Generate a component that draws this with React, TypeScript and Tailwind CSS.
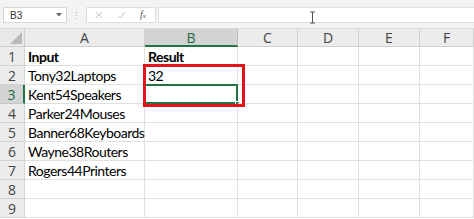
import React from "react";

const cols = ["A", "B", "C", "D", "E", "F"];
const widths = [120, 93, 60, 61, 61, 54];
const data: Record<number, [string, string, boolean?]> = {
  1: ["Input", "Result", true],
  2: ["Tony32Laptops", "32"],
  3: ["Kent54Speakers", ""],
  4: ["Parker24Mouses", ""],
  5: ["Banner68Keyboards", ""],
  6: ["Wayne38Routers", ""],
  7: ["Rogers44Printers", ""],
  8: ["", ""],
  9: ["", ""],
};

export default function App() {
  const rows = [1, 2, 3, 4, 5, 6, 7, 8, 9];
  return (
    <div
      className="relative w-[474px] h-[219px] overflow-hidden bg-white"
      style={{ fontFamily: "Lato, 'Liberation Sans', sans-serif" }}
    >
      {/* toolbar */}
      <div className="h-[29px] bg-[#f3f3f3] border-b border-[#dadada] flex items-start pt-[7px] pl-[3px]">
        <div className="w-[64px] h-[16px] bg-white border border-[#d6d6d6] flex items-center justify-between pl-[6px] pr-[4px]">
          <span className="text-[10px] text-[#333]" style={{ fontFamily: "'Liberation Sans', sans-serif" }}>B3</span>
          <svg width="6" height="4" viewBox="0 0 6 4"><path d="M0 0 L6 0 L3 3.5 Z" fill="#666" /></svg>
        </div>
        <div className="w-[19px] h-[16px] flex flex-col items-center justify-center gap-[2px]">
          <span className="w-[1px] h-[1px] bg-[#b0b0b0]" />
          <span className="w-[1px] h-[1px] bg-[#b0b0b0]" />
          <span className="w-[1px] h-[1px] bg-[#b0b0b0]" />
        </div>
        <div className="w-[70px] h-[16px] bg-white border border-[#dedede] flex items-center">
          <svg className="ml-[8px]" width="8" height="8" viewBox="0 0 8 8"><path d="M1 1 L7 7 M7 1 L1 7" stroke="#c4c4c4" strokeWidth="1" /></svg>
          <svg className="ml-[14px]" width="9" height="8" viewBox="0 0 9 8"><path d="M1 4.5 L3.5 7 L8 1" stroke="#c4c4c4" strokeWidth="1" fill="none" /></svg>
          <span className="ml-[14px] text-[10px] italic text-[#555] leading-none" style={{ fontFamily: "'Liberation Serif', serif" }}>f<span className="text-[7px]">x</span></span>
        </div>
        <div className="ml-[2px] flex-1 h-[16px] bg-white border border-[#e0e0e0] border-r-0" />
      </div>
      {/* I-beam cursor */}
      <svg className="absolute left-[309px] top-[11px]" width="7" height="13" viewBox="0 0 7 13">
        <path d="M1 1 H6 M3.5 1 V12 M1 12 H6" stroke="#555" strokeWidth="1" fill="none" />
      </svg>

      {/* grid */}
      <div
        className="grid"
        style={{ gridTemplateColumns: `25px ${widths.map((w) => w + "px").join(" ")}`, gridTemplateRows: `18px repeat(9, 19px)` }}
      >
        {/* corner */}
        <div className="bg-[#e9e9e9] border-r border-b border-[#cfcfcf] relative">
          <svg className="absolute right-[2px] bottom-[2px]" width="12" height="12" viewBox="0 0 12 12"><path d="M12 0 L12 12 L0 12 Z" fill="#b9b9b9" /></svg>
        </div>
        {cols.map((c) => (
          <div
            key={c}
            className={
              c === "B"
                ? "bg-[#d3d3d3] border-r border-[#bdbdbd] border-b-2 border-b-[#217346] flex items-center justify-center text-[14px] text-[#1e6b3f]"
                : "bg-[#ececec] border-r border-b border-[#d0d0d0] flex items-center justify-center text-[14px] text-[#444]"
            }
            style={{ fontFamily: "'Open Sans', sans-serif" }}
          >
            {c}
          </div>
        ))}
        {rows.map((r) => (
          <React.Fragment key={r}>
            <div
              className={
                r === 3
                  ? "bg-[#d3d3d3] border-b border-[#c6c6c6] border-r-2 border-r-[#217346] flex items-center justify-center text-[14px] text-[#1e6b3f]"
                  : "bg-[#ececec] border-r border-b border-[#d4d4d4] flex items-center justify-center text-[14px] text-[#444]"
              }
              style={{ fontFamily: "'Open Sans', sans-serif" }}
            >
              {r}
            </div>
            {cols.map((c, i) => {
              const val = i === 0 ? data[r][0] : i === 1 ? data[r][1] : "";
              const bold = data[r][2];
              const selected = r === 3 && c === "B";
              return (
                <div
                  key={c}
                  className={`relative border-r border-b border-[#e0e0e0] flex items-center pl-[3px] text-[14px] tracking-[-0.5px] text-black whitespace-nowrap ${bold ? "font-bold" : ""}`}
                >
                  {val}
                  {selected && (
                    <>
                      <div className="absolute -left-[1px] -top-[1px] -right-[1px] -bottom-[1px] border-2 border-[#217346]" />
                      <div className="absolute -right-[3px] -bottom-[3px] w-[5px] h-[5px] bg-[#217346] border border-white" />
                    </>
                  )}
                </div>
              );
            })}
          </React.Fragment>
        ))}
      </div>

      {/* red annotation */}
      <div className="absolute left-[143px] top-[64px] w-[102px] h-[43px] border-[3px] border-[#e3141b]" />
    </div>
  );
}
